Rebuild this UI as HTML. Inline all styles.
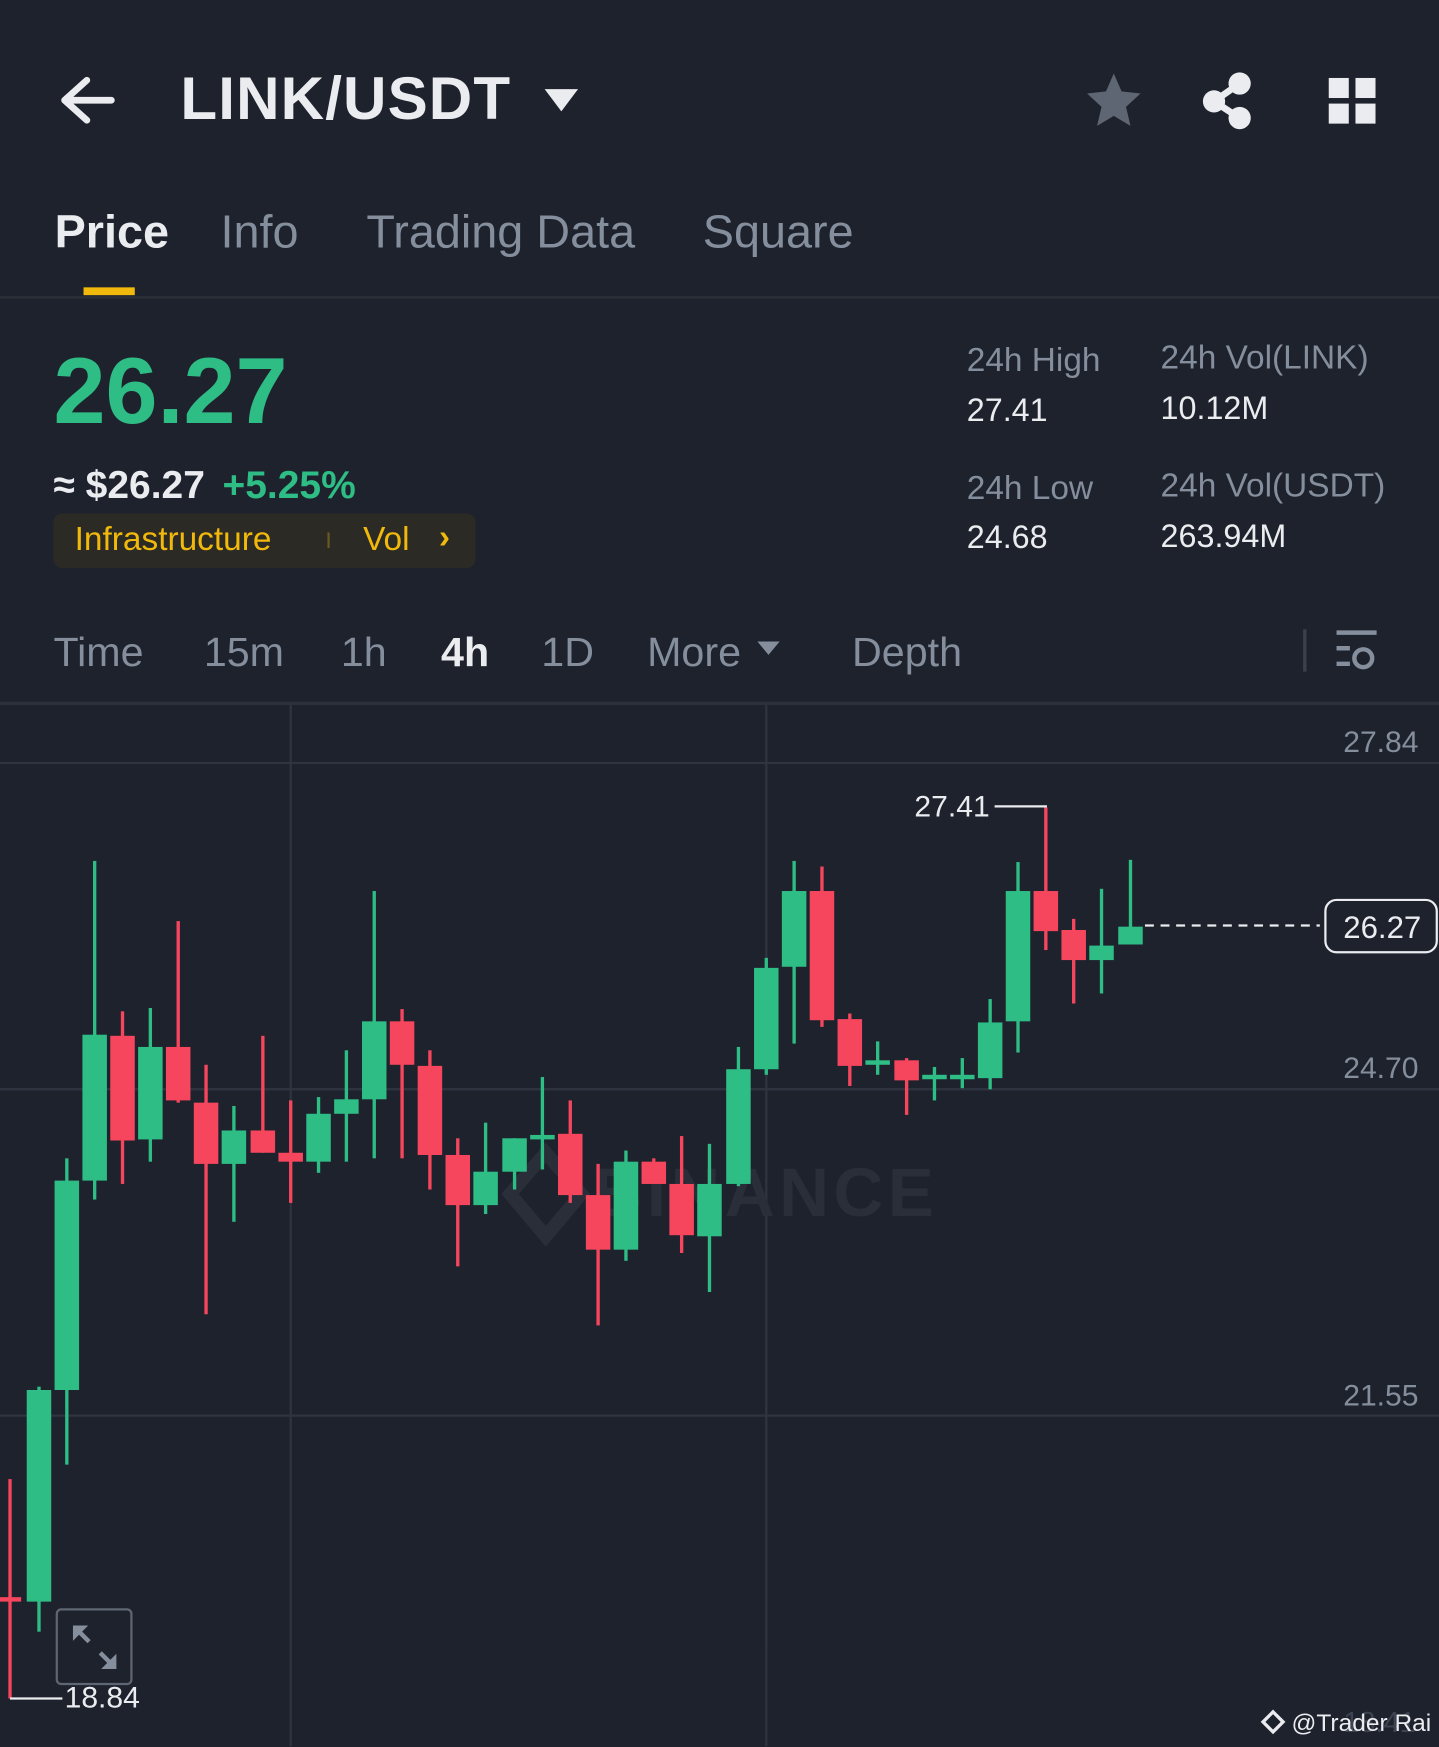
<!DOCTYPE html>
<html><head><meta charset="utf-8"><style>
html,body{margin:0;padding:0;background:#1e222d;width:1439px;height:1747px;overflow:hidden}
#w{position:absolute;left:0;top:0;width:1292px;height:1568px;transform:scale(1.11378);transform-origin:0 0;font-family:"Liberation Sans",sans-serif;color:#eaecef}
.a{position:absolute;white-space:nowrap}
.g{color:#848e9c}
</style></head><body><div id="w">
<svg class="a" style="left:0;top:0" width="1292" height="1568" viewBox="0 0 1292 1568">
<path d="M100 90H60M78 72L58 90L78 108" stroke="#eaecef" stroke-width="6" fill="none" stroke-linecap="round" stroke-linejoin="round"/>
<path d="M489 80H519L504 100Z" fill="#eaecef"/>
<path d="M1000 66L1007 82L1024 84L1011 96L1015 113L1000 104L985 113L989 96L976 84L993 82Z" fill="#5e6673"/>
<g fill="#eaecef"><circle cx="1113" cy="75" r="10"/><circle cx="1090" cy="91" r="10"/><circle cx="1113" cy="106" r="10"/></g>
<path d="M1113 75L1090 91L1113 106" stroke="#eaecef" stroke-width="6" fill="none"/>
<g fill="#eaecef"><rect x="1193" y="70" width="18" height="18"/><rect x="1217" y="70" width="18" height="18"/><rect x="1193" y="93" width="18" height="18"/><rect x="1217" y="93" width="18" height="18"/></g>
<rect x="75" y="258" width="46" height="7" fill="#f0b90b"/>
<rect x="0" y="266" width="1292" height="2" fill="#2b3139"/>
<rect x="0" y="630" width="1292" height="3" fill="#2b3139"/>
<path d="M680 576H700L690 588Z" fill="#848e9c"/>
<rect x="1170" y="565" width="3" height="38" fill="#3b414c"/>
<g stroke="#848e9c" stroke-width="4" fill="none"><path d="M1200 568H1236M1200 582H1212M1200 596H1212"/><circle cx="1224" cy="591" r="8"/></g>
<g stroke="#2e3440" stroke-width="2"><path d="M0 685H1292M0 978H1292M0 1271H1292M261 633V1568M688 633V1568"/></g>
<text x="532" y="1092" font-family="Liberation Sans" font-weight="bold" font-size="62" fill="#292e39" letter-spacing="4">BINANCE</text>
<path d="M490 1035L522 1072L490 1110L458 1072Z" fill="none" stroke="#292e39" stroke-width="12"/>
<g id="c"></g>
<path d="M1028 831H1185" stroke="#eaecef" stroke-width="2" stroke-dasharray="8 6"/>
<rect x="1190" y="808" width="100" height="47" rx="10" fill="#1e222d" stroke="#eaecef" stroke-width="2"/>
<path d="M893 724H940" stroke="#eaecef" stroke-width="2"/>
<path d="M9 1525H56" stroke="#eaecef" stroke-width="2"/>
<rect x="51" y="1445" width="67" height="67" rx="4" fill="#1e222d" stroke="#5e6673" stroke-width="2"/>
<g stroke="#848e9c" stroke-width="4" fill="#848e9c"><path d="M67 1461L80 1474M103 1497L90 1484"/><path d="M66 1460H78L66 1472Z M104 1498H92L104 1486Z" stroke-width="1"/></g>
<path d="M1143 1537L1152 1546L1143 1555L1134 1546Z" fill="none" stroke="#eaecef" stroke-width="3"/>
</svg>
<div class="a" style="left:162px;top:58px;font-size:54px;font-weight:bold;letter-spacing:1px">LINK/USDT</div>
<div class="a" style="left:49px;top:184px;font-size:42px;font-weight:bold">Price</div>
<div class="a g" style="left:198px;top:184px;font-size:42px">Info</div>
<div class="a g" style="left:329px;top:184px;font-size:42px">Trading Data</div>
<div class="a g" style="left:631px;top:184px;font-size:42px">Square</div>
<div class="a" style="left:48px;top:303px;font-size:84px;font-weight:bold;color:#2ebd85">26.27</div>
<div class="a" style="left:48px;top:416px;font-size:35px;font-weight:bold">≈ $26.27 <span style="color:#2ebd85;margin-left:6px">+5.25%</span></div>
<div class="a" style="left:48px;top:461px;width:379px;height:49px;background:#2c2a24;border-radius:8px"></div>
<div class="a" style="left:67px;top:468px;font-size:30px;color:#f0b90b">Infrastructure</div>
<div class="a" style="left:294px;top:478px;width:2px;height:14px;background:#6b5a20"></div>
<div class="a" style="left:326px;top:468px;font-size:30px;color:#f0b90b">Vol</div>
<div class="a" style="left:394px;top:466px;font-size:30px;color:#f0b90b;font-weight:bold">›</div>
<div class="a g" style="left:868px;top:307px;font-size:30px">24h High</div>
<div class="a" style="left:868px;top:353px;font-size:29px">27.41</div>
<div class="a g" style="left:868px;top:422px;font-size:30px">24h Low</div>
<div class="a" style="left:868px;top:467px;font-size:29px">24.68</div>
<div class="a g" style="left:1042px;top:305px;font-size:30px">24h Vol(LINK)</div>
<div class="a" style="left:1042px;top:351px;font-size:29px">10.12M</div>
<div class="a g" style="left:1042px;top:420px;font-size:30px">24h Vol(USDT)</div>
<div class="a" style="left:1042px;top:466px;font-size:29px">263.94M</div>
<div class="a g" style="left:48px;top:565px;font-size:37px">Time</div>
<div class="a g" style="left:183px;top:565px;font-size:37px">15m</div>
<div class="a g" style="left:306px;top:565px;font-size:37px">1h</div>
<div class="a" style="left:396px;top:565px;font-size:37px;font-weight:bold">4h</div>
<div class="a g" style="left:486px;top:565px;font-size:37px">1D</div>
<div class="a g" style="left:581px;top:565px;font-size:37px">More</div>
<div class="a g" style="left:765px;top:565px;font-size:37px">Depth</div>
<div class="a g" style="left:1206px;top:651px;font-size:27px">27.84</div>
<div class="a g" style="left:1206px;top:944px;font-size:27px">24.70</div>
<div class="a g" style="left:1206px;top:1238px;font-size:27px">21.55</div>
<div class="a" style="left:821px;top:709px;font-size:27px">27.41</div>
<div class="a" style="left:1206px;top:817px;font-size:28px">26.27</div>
<div class="a" style="left:58px;top:1509px;font-size:27px">18.84</div>
<div class="a" style="left:1206px;top:1531px;font-size:26px;color:#3d4350">18.41</div>
<div class="a" style="right:7px;top:1534px;font-size:22px">@Trader Rai</div>
</div>
<script>
var d=[[9,'r',1328,1434,1438,1525],[35,'g',1245,1248,1438,1465],[60,'g',1040,1060,1248,1315],[85,'g',773,929,1060,1077],[110,'r',908,930,1024,1063],[135,'g',905,940,1023,1043],[160,'r',827,940,988,990],[185,'r',956,990,1045,1180],[210,'g',993,1015,1045,1097],[236,'r',930,1015,1035,1035],[261,'r',988,1035,1043,1080],[286,'g',985,1000,1043,1053],[311,'g',943,987,1000,1043],[336,'g',800,917,987,1040],[361,'r',906,917,956,1040],[386,'r',943,957,1037,1068],[411,'r',1022,1037,1082,1137],[436,'g',1008,1052,1082,1090],[462,'g',1022,1022,1052,1068],[487,'g',967,1019,1023,1050],[512,'r',988,1018,1073,1080],[537,'r',1045,1073,1122,1190],[562,'g',1033,1043,1122,1132],[587,'r',1040,1043,1063,1062],[612,'r',1020,1063,1109,1125],[637,'g',1027,1063,1110,1160],[663,'g',940,960,1063,1065],[688,'g',860,869,960,965],[713,'g',773,800,868,937],[738,'r',778,800,916,922],[763,'r',910,915,957,975],[788,'g',935,952,956,965],[814,'r',950,952,970,1001],[839,'g',958,965,969,988],[864,'g',950,965,969,977],[889,'g',897,918,968,978],[914,'g',774,800,917,945],[939,'r',725,800,836,853],[964,'r',825,835,862,901],[989,'g',798,849,862,892],[1015,'g',772,832,848,848]];
var s='';d.forEach(function(c){var col=c[1]=='g'?'#2ebd85':'#f6465d';var w=c[0]==9?20:22;s+='<rect x="'+(c[0]-1.5)+'" y="'+c[2]+'" width="3" height="'+(c[5]-c[2])+'" fill="'+col+'"/>';s+='<rect x="'+(c[0]-w/2)+'" y="'+c[3]+'" width="'+w+'" height="'+Math.max(3,c[4]-c[3])+'" fill="'+col+'"/>';});
document.getElementById('c').innerHTML=s;
</script>
</body></html>
